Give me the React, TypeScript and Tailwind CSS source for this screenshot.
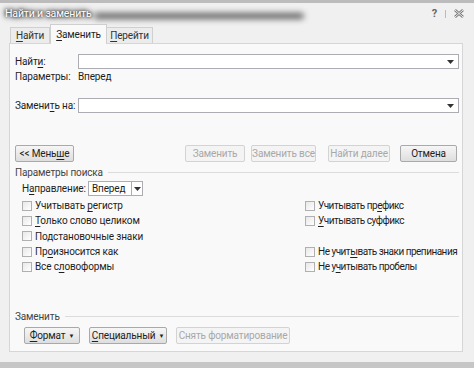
import React from "react";

const U = ({ children }: { children: React.ReactNode }) => (
  <span className="underline underline-offset-[2px] decoration-[1px]">{children}</span>
);

const Btn = ({
  children,
  w,
  disabled,
}: {
  children: React.ReactNode;
  w: string;
  disabled?: boolean;
}) => (
  <div
    className={
      "h-[17px] flex items-center justify-center rounded-[2px] border " +
      w +
      (disabled
        ? " border-[#d3d3d3] bg-[#f4f4f4] text-[#a8a8a8]"
        : " border-[#a9a9a9] bg-gradient-to-b from-[#f6f6f6] to-[#dedede] text-[#222]")
    }
  >
    {children}
  </div>
);

const Box = () => (
  <div className="w-[10px] h-[10px] border border-[#b0b0b0] bg-gradient-to-br from-[#e8e8e8] to-[#ffffff] shrink-0" />
);

const Check = ({ children }: { children: React.ReactNode }) => (
  <div className="h-[15.3px] flex items-center gap-[3px]">
    <Box />
    <span>{children}</span>
  </div>
);

const Arrow = () => (
  <svg width="7" height="4" viewBox="0 0 7 4">
    <path d="M0 0h7L3.5 4z" fill="#333" />
  </svg>
);

const Combo = () => (
  <div className="flex-1 h-[15px] border border-[#abadb3] bg-white flex justify-end items-center pr-[4px]">
    <Arrow />
  </div>
);

export default function App() {
  return (
    <div
      className="w-[474px] h-[368px] bg-[#f0f0f0] border-t-[3px] border-[#bcbcbc] flex flex-col text-[10px] tracking-[-0.15px] leading-[13px] whitespace-nowrap text-[#1e1e1e] overflow-hidden"
      style={{ fontFamily: 'Roboto, "Noto Sans", sans-serif' }}
    >
      {/* title bar */}
      <div className="h-[21px] flex items-center pl-[5px] pr-[10px] shrink-0">
        <span className="text-white text-[10.5px] [text-shadow:0_0_3px_#222,0_0_5px_#333,0_0_7px_#444]">
          Найти и заменить
        </span>
        <div className="ml-[2px] w-[210px] h-[6px] mt-[5px] bg-[#3a3a3a] rounded-full blur-[3px] opacity-80" />
        <div className="ml-auto flex items-center gap-[8px] text-[#555]">
          <span className="text-[11px] font-bold text-[#666]">?</span>
          <span className="w-px h-[8px] bg-[#bbb]" />
          <svg width="10" height="9" viewBox="0 0 10 9">
            <path d="M1 1L9 8M9 1L1 8" stroke="#777" strokeWidth="2.6" fill="none" />
            <path d="M1 1L9 8M9 1L1 8" stroke="#f0f0f0" strokeWidth="1" fill="none" />
          </svg>
        </div>
      </div>

      {/* tabs */}
      <div className="h-[19px] pl-[10px] flex items-end shrink-0 relative z-10">
        <div className="h-[16px] w-[40px] border border-b-0 border-[#d0d0d0] bg-[#ececec] flex items-center justify-center text-[#333]">
          <U>Н</U>айти
        </div>
        <div className="h-[20px] w-[57px] -mb-px border border-b-0 border-[#cfcfcf] bg-[#f9f9f9] flex items-center justify-center">
          <U>З</U>аменить
        </div>
        <div className="h-[16px] w-[46px] border border-b-0 border-l-0 border-[#d0d0d0] bg-[#ececec] flex items-center justify-center text-[#333]">
          <U>П</U>ерейти
        </div>
      </div>

      {/* panel */}
      <div className="ml-[9px] w-[454px] h-[309px] border border-[#d6d6d6] bg-[#f9f9f9] pl-[5px] pr-[3px] flex flex-col shrink-0">
        <div className="flex items-center mt-[10px]">
          <span className="w-[63px]">
            Найт<U>и</U>:
          </span>
          <Combo />
        </div>
        <div className="flex items-center h-[12px] mt-[1px]">
          <span className="w-[63px]">Параметры:</span>
          <span>Вперед</span>
        </div>
        <div className="flex items-center mt-[16px]">
          <span className="w-[63px]">
            Замени<U>т</U>ь на:
          </span>
          <Combo />
        </div>

        <div className="flex items-center mt-[32px]">
          <Btn w="w-[59px]">
            &lt;&lt; Мень<U>ш</U>е
          </Btn>
          <div className="ml-[111px]">
            <Btn w="w-[60px]" disabled>
              Заменить
            </Btn>
          </div>
          <div className="ml-[6px]">
            <Btn w="w-[65px]" disabled>
              Заменить все
            </Btn>
          </div>
          <div className="ml-[12px]">
            <Btn w="w-[62px]" disabled>
              Найти далее
            </Btn>
          </div>
          <div className="ml-[10px]">
            <Btn w="w-[57px]">Отмена</Btn>
          </div>
        </div>

        <div className="flex items-center h-[12px] mt-[4px] text-[#444]">
          <span>Параметры поиска</span>
          <div className="flex-1 h-px bg-[#dcdcdc] ml-[5px]" />
        </div>

        <div className="flex items-center mt-[3px] pl-[7px]">
          <span className="w-[66px]">
            Н<U>а</U>правление:
          </span>
          <div className="w-[55px] h-[15px] border border-[#abadb3] bg-white flex items-center">
            <span className="pl-[3px] flex-1">Вперед</span>
            <div className="w-[11px] h-full border-l border-[#abadb3] flex items-center justify-center">
              <Arrow />
            </div>
          </div>
        </div>

        <div className="flex mt-[2px] pl-[7px]">
          <div className="w-[283px] shrink-0 flex flex-col">
            <Check>
              Учитывать <U>р</U>егистр
            </Check>
            <Check>
              <U>Т</U>олько слово целиком
            </Check>
            <Check>Подстановочные знаки</Check>
            <Check>
              Пр<U>о</U>износится как
            </Check>
            <Check>
              Все с<U>л</U>овоформы
            </Check>
          </div>
          <div className="flex flex-col tracking-[-0.5px]">
            <Check>
              Учитывать пр<U>е</U>фикс
            </Check>
            <Check>
              <U>У</U>читывать суффикс
            </Check>
            <div className="h-[15.3px]" />
            <Check>
              Не учит<U>ы</U>вать знаки препинания
            </Check>
            <Check>
              Не у<U>ч</U>итывать пробелы
            </Check>
          </div>
        </div>

        <div className="flex items-center h-[12px] mt-[36px] text-[#444]">
          <span>Заменить</span>
          <div className="flex-1 h-px bg-[#dcdcdc] ml-[5px]" />
        </div>

        <div className="flex items-center mt-[5px] pl-[9px]">
          <Btn w="w-[56px]">
            <U>Ф</U>ормат
            <span className="ml-[3px] text-[6px]">▼</span>
          </Btn>
          <div className="ml-[9px]">
            <Btn w="w-[78px]">
              <U>С</U>пециальный
              <span className="ml-[3px] text-[6px]">▼</span>
            </Btn>
          </div>
          <div className="ml-[9px]">
            <Btn w="w-[114px]" disabled>
              Снять форматирование
            </Btn>
          </div>
        </div>
      </div>

      <div className="flex-1" />
      <div className="h-[6px] bg-[#c6c6c6] shrink-0" />
    </div>
  );
}
